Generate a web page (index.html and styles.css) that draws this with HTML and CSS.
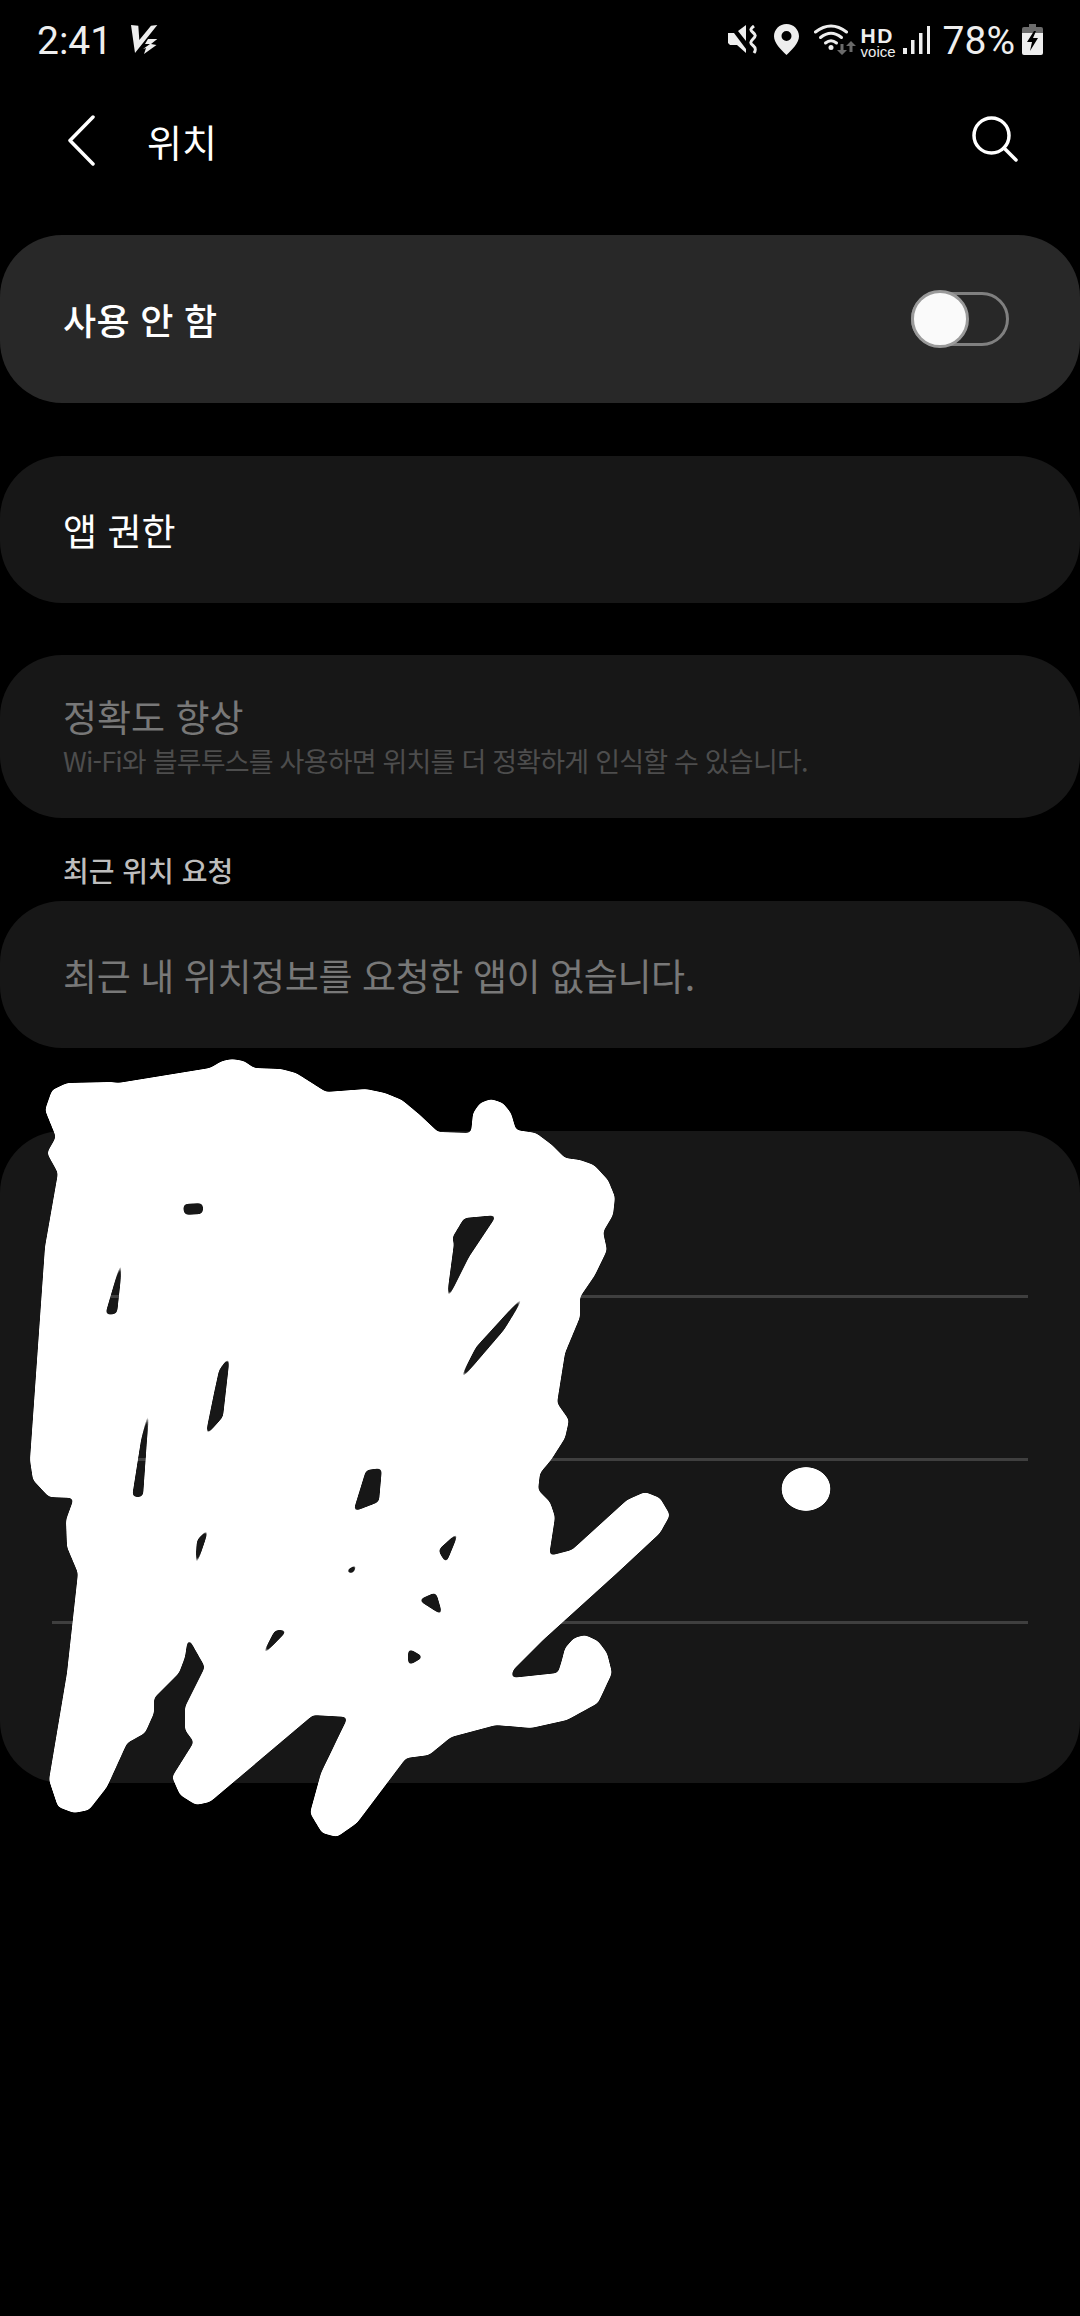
FILE: index.html
```html
<!DOCTYPE html>
<html lang="ko">
<head>
    <meta charset="UTF-8">
    <meta name="viewport" content="width=device-width, initial-scale=1.0">
    <title>위치</title>
    <link rel="stylesheet" href="styles.css">
</head>
<body>
    <div class="status-bar">
        <span class="clock">2:41</span>
        <svg class="status-logo" width="28" height="31" viewBox="0 0 28 31">
            <path fill="#eee" d="M1 1L8.300 1.700L9.300 16L21 1.700L27.300 1L5 29Z"/>
            <path fill="#eee" d="M18 15H27.300L21 20L26.500 21L14 30L16 24L13 25L20 20L15 20Z"/>
        </svg>
        <div class="status-icons">
            <svg class="icon-mute" width="30" height="30" viewBox="0 0 30 30">
                <path fill="#eee" d="M10 6L18 0V16ZM0 8H6L18 24V28L9 20H2L0 18Z"/>
                <path fill="none" stroke="#eee" stroke-width="3" d="M26 1C22 4 22 5 25 7.500C28 10 28 11 25 14C22 17 22 18 25 20.500C28 23 28 25 26 28"/>
            </svg>
            <svg class="icon-pin" width="25" height="31" viewBox="0 0 25 31">
                <path fill="#eee" fill-rule="evenodd" d="M12.500 0C5.600 0 0 5.500 0 12.300C0 19 7 26 12.500 31C18 26 25 19 25 12.300C25 5.500 19.400 0 12.500 0ZM12.500 7A5 5 0 1 1 12.500 17A5 5 0 1 1 12.500 7Z"/>
            </svg>
            <svg class="icon-wifi" width="44" height="32" viewBox="0 0 44 32">
                <g fill="none" stroke="#eee" stroke-width="3" stroke-linecap="round">
                    <path d="M1.500 8Q17 -4 32.500 8"/>
                    <path d="M6.500 13.500Q17 5 27.500 13.500"/>
                    <path d="M11.500 19Q17 14.500 22.500 19"/>
                </g>
                <circle cx="17" cy="23.500" r="2.500" fill="#eee"/>
                <path fill="#6a6a6a" d="M26.500 20H29.500V26H33L28 31L23 26H26.500ZM35.500 28V22H32L37 17L42 22H38.500V28Z"/>
            </svg>
            <div class="hd-voice">
                <span class="hd">HD</span>
                <span class="voice">voice</span>
            </div>
            <svg class="icon-signal" width="27" height="28" viewBox="0 0 27 28">
                <rect x="0" y="22" width="4" height="6" fill="#eee"/>
                <rect x="8" y="14" width="3.500" height="14" fill="#eee"/>
                <rect x="16" y="7" width="3.500" height="21" fill="#eee"/>
                <rect x="24" y="0" width="3" height="28" fill="#eee"/>
            </svg>
            <span class="battery-text">78%</span>
            <svg class="icon-battery" width="21" height="31" viewBox="0 0 21 31">
                <path fill="#6c6c6c" d="M7 0H14V3H19Q21 3 21 5V9H0V5Q0 3 2 3H7Z"/>
                <path fill="#eee" d="M0 9H21V29Q21 31 19 31H2Q0 31 0 29Z"/>
                <path fill="#000" d="M12 7L5 18H10L8 27L16 14H11L14 7Z"/>
            </svg>
        </div>
    </div>

    <header class="toolbar">
        <svg class="back-icon" width="28" height="51" viewBox="0 0 28 51">
            <path fill="none" stroke="#fff" stroke-width="3.500" stroke-linecap="round" stroke-linejoin="round" d="M25 2L2 25.500L25 49"/>
        </svg>
        <h1 class="toolbar-title">위치</h1>
        <svg class="search-icon" width="50" height="50" viewBox="0 0 50 50">
            <circle cx="20.500" cy="20.500" r="17.500" fill="none" stroke="#fff" stroke-width="3.500"/>
            <path stroke="#fff" stroke-width="3.500" stroke-linecap="round" d="M33 33L45 45"/>
        </svg>
    </header>

    <main>
        <section class="card card-master">
            <span class="master-label">사용 안 함</span>
            <div class="switch"><div class="switch-knob"></div></div>
        </section>

        <section class="card card-permission">
            <span class="item-title">앱 권한</span>
        </section>

        <section class="card card-accuracy">
            <div class="item-title disabled">정확도 향상</div>
            <div class="item-sub">Wi-Fi와 블루투스를 사용하면 위치를 더 정확하게 인식할 수 있습니다.</div>
        </section>

        <h2 class="section-label">최근 위치 요청</h2>

        <section class="card card-empty">
            <span class="item-title disabled empty-text">최근 내 위치정보를 요청한 앱이 없습니다.</span>
        </section>

        <section class="card card-services">
            <div class="service-row"></div>
            <hr class="divider">
            <div class="service-row"></div>
            <hr class="divider">
            <div class="service-row"></div>
            <hr class="divider">
            <div class="service-row"></div>
        </section>
    </main>

    <!-- white marker scribble drawn over the screenshot -->
    <svg class="scribble" width="1080" height="2316" viewBox="0 0 1080 2316">
        <defs>
            <filter id="round-marker" x="0" y="0" width="100%" height="100%" color-interpolation-filters="sRGB">
                <feGaussianBlur stdDeviation="2.500"/>
                <feColorMatrix type="matrix" values="0 0 0 0 1  0 0 0 0 1  0 0 0 0 1  0 0 0 9 -4"/>
            </filter>
        </defs>
        <g filter="url(#round-marker)">
            <path fill="#fff" fill-rule="evenodd" d="M45 1110L52 1090L67 1083L112 1082L118 1083L210 1068L222 1061L232 1059L244 1061L254 1068L281 1069L296 1073L304 1078L326 1092L366 1089L385 1093L402 1100L420 1115L438 1132L471 1133L473 1113L480 1103L491 1099L503 1103L511 1113L516 1130L536 1133L552 1145L565 1158L580 1160L594 1165L608 1180L615 1197L613 1215L603 1232L607 1250L595 1275L580 1297L580 1317L565 1353L557 1403L569 1420L565 1438L551 1460L540 1473L538 1490L550 1502L555 1517L549 1556L572 1550L627 1500L645 1492L660 1498L670 1515L660 1533L617 1573L543 1640L513 1670L511 1678L558 1673L562 1660L565 1648L574 1638L585 1635L598 1641L607 1653L612 1673L598 1703L567 1720L531 1728L496 1725L451 1737L429 1755L406 1758L357 1823L337 1837L322 1833L310 1813L321 1773L348 1717L313 1715L210 1802L196 1805L180 1795L172 1777L194 1742L185 1730L185 1707L205 1667L188 1637L185 1657L179 1673L154 1698L154 1713L145 1733L127 1743L107 1787L89 1810L74 1813L58 1807L49 1780L67 1673L78 1573L67 1547L66 1520L74 1498L49 1497L33 1480L30 1460L45 1247L58 1173L47 1153L56 1137Z
                M183 1204L203 1203L203 1214L184 1215Z
                M464 1218L497 1215L469 1257L446 1303L454 1243L452 1238Z
                M124 1250L105 1315L117 1314Z
                M530 1288L504 1330L456 1386L476 1347Z
                M230 1355L219 1370L214 1393L205 1437L223 1417L228 1373Z
                M152 1393L141 1440L132 1497L143 1497L147 1440Z
                M210 1526L197 1540L194 1574Z
                M366 1470L382 1468L379 1502L353 1512Z
                M460 1530L438 1550L446 1564Z
                M418 1600L436 1592L443 1616Z
                M275 1630L288 1630L259 1660Z
                M359 1562L353 1574L344 1572Z
                M408 1648L424 1657L408 1666Z"/>
            <ellipse cx="806" cy="1489" rx="24.500" ry="22" fill="#fff"/>
        </g>
    </svg>
</body>
</html>
```

FILE: styles.css
```css
body {
    font-family: "Noto Sans CJK KR", "Noto Sans", sans-serif;
    margin: 0;
    padding: 0;
    background-color: #000;
    color: #fff;
    width: 1080px;
    height: 2316px;
    position: relative;
    overflow: hidden;
}

/* status bar */
.status-bar {
    display: flex;
    align-items: flex-start;
    height: 80px;
    padding: 24px 37px 0 37px;
    box-sizing: border-box;
    color: #eee;
    font-family: Roboto, sans-serif;
}

.clock {
    font-size: 39px;
    line-height: 34px;
    width: 93px;
}

.status-logo {
    margin-top: 0;
}

.status-icons {
    display: flex;
    align-items: flex-start;
    margin-left: auto;
}

.icon-mute {
    margin: 1px 16px 0 0;
}

.icon-pin {
    margin-right: 15px;
}

.icon-wifi {
    margin-right: 3px;
}

.hd-voice {
    display: flex;
    flex-direction: column;
    width: 34px;
    margin-right: 8px;
    font-family: "Liberation Sans", sans-serif;
}

.hd {
    font-size: 21px;
    font-weight: bold;
    line-height: 20px;
    letter-spacing: 1.500px;
    margin-top: 2px;
}

.voice {
    font-size: 15px;
    line-height: 14px;
    margin-top: -1px;
}

.icon-signal {
    margin: 2px 13px 0 0;
}

.battery-text {
    font-size: 39px;
    line-height: 34px;
    margin-right: 7px;
}

/* toolbar */
.toolbar {
    display: flex;
    align-items: center;
    height: 120px;
    padding: 0 59px 0 68px;
    box-sizing: border-box;
}

.back-icon {
    margin-right: 51px;
}

.toolbar-title {
    font-size: 38px;
    font-weight: 400;
    margin: 0;
}

.search-icon {
    margin-left: auto;
}

/* cards */
main {
    padding-top: 35px;
}

.card {
    box-sizing: border-box;
    background: #171717;
    border-radius: 62px;
    padding: 0 52px 0 63px;
    margin-bottom: 52px;
}

.card-master {
    display: flex;
    align-items: center;
    justify-content: space-between;
    height: 168px;
    background: #282828;
    margin-bottom: 53px;
}

.master-label {
    font-size: 36px;
    font-weight: 500;
    letter-spacing: 0.300px;
}

.card-permission,
.card-empty {
    display: flex;
    align-items: center;
    height: 147px;
}

.card-accuracy {
    height: 163px;
    padding-top: 36px;
    margin-bottom: 32px;
}

.card-empty {
    margin-bottom: 83px;
}

.item-title {
    font-size: 37px;
    line-height: 50px;
}

.item-title.disabled {
    color: #787878;
}

.empty-text {
    letter-spacing: -0.400px;
}

.item-sub {
    font-size: 27px;
    line-height: 40px;
    letter-spacing: -0.800px;
    color: #4d4d4d;
}

.section-label {
    font-size: 28px;
    font-weight: 500;
    line-height: 40px;
    color: #bdbdbd;
    margin: 0 0 11px 63px;
}

/* switch */
.switch {
    position: relative;
    box-sizing: border-box;
    width: 98px;
    height: 54px;
    margin-right: 19px;
    border: 3px solid #808080;
    border-radius: 27px;
}

.switch-knob {
    position: absolute;
    left: -3px;
    top: -5px;
    box-sizing: border-box;
    width: 58px;
    height: 58px;
    background: #fafafa;
    border: 3px solid #9a9a9a;
    border-radius: 50%;
}

/* services list */
.card-services {
    padding: 0;
    margin-bottom: 0;
}

.service-row {
    height: 160px;
}

.service-row:first-child {
    height: 164px;
}

.service-row:last-child {
    height: 159px;
}

.divider {
    height: 3px;
    margin: 0 52px;
    border: none;
    background: #3f3f3f;
}

/* marker scribble */
.scribble {
    position: absolute;
    left: 0;
    top: 0;
    pointer-events: none;
}
```
